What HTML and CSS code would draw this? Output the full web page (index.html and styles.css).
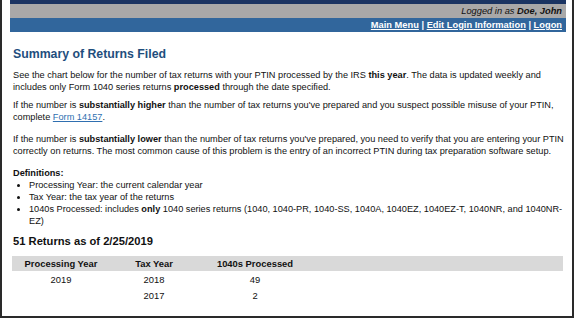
FILE: index.html
```html
<!DOCTYPE html>
<html>
<head>
<meta charset="utf-8">
<link rel="stylesheet" href="styles.css">
</head>
<body>
<div class="frame">
  <div class="topstrip"></div>
  <div class="userbar">Logged in as <b>Doe, John</b></div>
  <div class="navbar"><a href="#">Main Menu</a> | <a href="#">Edit Login Information</a> | <a href="#">Logon</a></div>
  <div class="content">
    <h1 class="title">Summary of Returns Filed</h1>
    <p class="para p1">See the chart below for the number of tax returns with your PTIN processed by the IRS <b>this year</b>. The data is updated weekly and includes only Form 1040 series returns <b>processed</b> through the date specified.</p>
    <p class="para p2">If the number is <b>substantially higher</b> than the number of tax returns you've prepared and you suspect possible misuse of your PTIN, complete <a href="#" class="link">Form 14157</a>.</p>
    <p class="para p3">If the number is <b>substantially lower</b> than the number of tax returns you've prepared, you need to verify that you are entering your PTIN correctly on returns. The most common cause of this problem is the entry of an incorrect PTIN during tax preparation software setup.</p>
    <div class="defs">
      <div class="defs-title">Definitions:</div>
      <ul class="deflist">
        <li>Processing Year: the current calendar year</li>
        <li>Tax Year: the tax year of the returns</li>
        <li>1040s Processed: includes <b>only</b> 1040 series returns (1040, 1040-PR, 1040-SS, 1040A, 1040EZ, 1040EZ-T, 1040NR, and 1040NR-EZ)</li>
      </ul>
    </div>
    <h2 class="subtitle">51 Returns as of 2/25/2019</h2>
    <table class="returns">
      <thead>
        <tr><th class="c1">Processing Year</th><th class="c2">Tax Year</th><th class="c3">1040s Processed</th><th class="c4"></th></tr>
      </thead>
      <tbody>
        <tr><td>2019</td><td>2018</td><td>49</td><td></td></tr>
        <tr><td></td><td>2017</td><td>2</td><td></td></tr>
      </tbody>
    </table>
  </div>
</div>
</body>
</html>
```
FILE: styles.css
```css
html, body {
  margin: 0;
  padding: 0;
  background: #fff;
}
.frame {
  width: 574px;
  height: 318px;
  box-sizing: border-box;
  border-left: 2px solid #2a2a2a;
  border-right: 2px solid #2a2a2a;
  border-bottom: 2px solid #2a2a2a;
  font-family: "Liberation Sans", Arial, sans-serif;
  color: #111;
  overflow: hidden;
}
.topstrip {
  height: 4px;
  margin: 0 6px 0 8px;
  background: #1b3462;
}
.userbar {
  height: 14px;
  margin: 0 6px 0 8px;
  background: #a9a8a8;
  text-align: right;
  font-size: 9.3px;
  line-height: 14px;
  font-style: italic;
  padding-right: 4px;
  color: #111;
}
.navbar {
  height: 14px;
  margin: 0 6px 0 8px;
  background: #31669c;
  text-align: right;
  font-size: 9.3px;
  line-height: 14px;
  font-weight: bold;
  color: #fff;
  padding-right: 4px;
}
.navbar a {
  color: #fff;
  text-decoration: underline;
}
.content {
  padding: 0 2px 0 11px;
}
.title {
  margin: 15px 0 0;
  font-size: 12.3px;
  line-height: 15px;
  font-weight: bold;
  color: #1f4e7d;
}
.para {
  margin: 0;
  font-size: 9.2px;
  line-height: 12px;
}
.p1 { margin-top: 7px; }
.p2 { margin-top: 6px; }
.p3 { margin-top: 10px; }
.link {
  color: #2f6fb0;
  text-decoration: underline;
}
.defs {
  margin-top: 10px;
  font-size: 9.2px;
  line-height: 12px;
}
.defs-title {
  font-weight: bold;
}
.deflist {
  margin: 0;
  padding-left: 16px;
}
.subtitle {
  margin: 7px 0 0;
  font-size: 11.2px;
  line-height: 14px;
  font-weight: bold;
}
.returns {
  margin: 8px 0 0 -1px;
  width: 551px;
  border-collapse: collapse;
  font-size: 9.4px;
}
.returns th {
  background: #d9d9d9;
  height: 15px;
  padding: 0;
  font-weight: bold;
  text-align: center;
}
.returns td {
  height: 16px;
  padding: 0;
  text-align: center;
}
.c1 { width: 98px; }
.c2 { width: 88px; }
.c3 { width: 114px; }
```
